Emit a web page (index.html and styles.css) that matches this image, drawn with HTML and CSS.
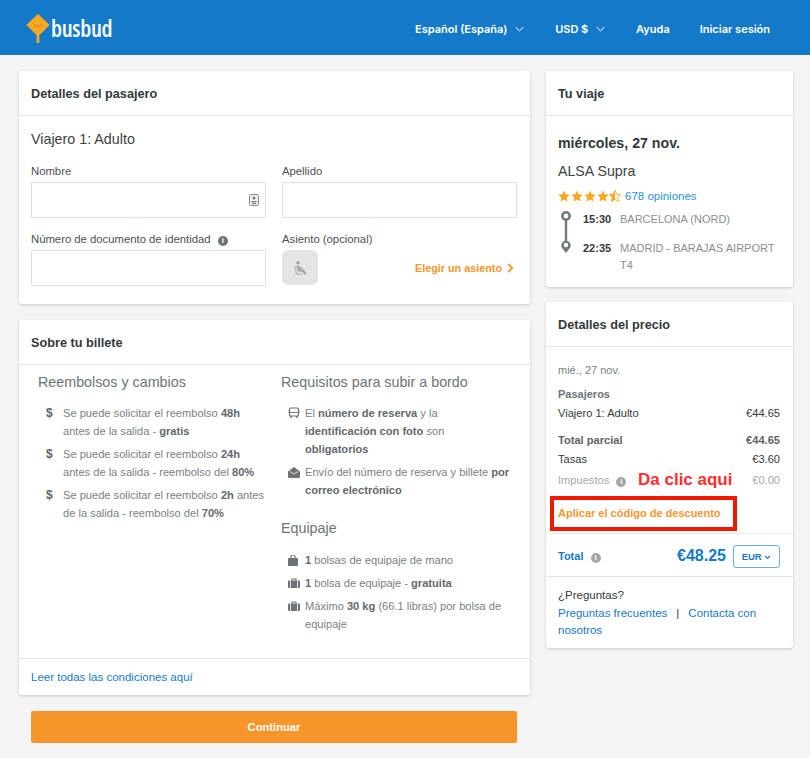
FILE: index.html
```html
<!DOCTYPE html>
<html lang="es">
<head>
    <meta charset="UTF-8">
    <meta name="viewport" content="width=device-width, initial-scale=1.0">
    <title>Busbud - Detalles del pasajero</title>
    <link rel="stylesheet" href="styles.css">
</head>
<body>
    <header class="topbar">
        <a class="logo" href="#">
            <svg class="logo-mark" width="24" height="29" viewBox="0 0 24 29">
                <rect x="10.6" y="18" width="2.8" height="11" fill="#f7a823"/>
                <path d="M12 .5 23.2 11 12.8 21.2a1.2 1.2 0 0 1-1.6 0L.8 11Z" fill="#f7a823" stroke="#f7a823" stroke-linejoin="round"/>
                <path d="M8 9.500c.6 3.600 7.400 3.600 8 0" fill="none" stroke="#e08a12" stroke-width="1.2"/>
            </svg>
            <span class="logo-text">busbud</span>
        </a>
        <nav class="topnav">
            <a href="#">Español (España) <svg class="caret" width="9" height="6" viewBox="0 0 9 6"><path d="M.7 1l3.800 3.800L8.300 1" fill="none" stroke="#9cc8ec" stroke-width="1.2"/></svg></a>
            <a href="#">USD $ <svg class="caret" width="9" height="6" viewBox="0 0 9 6"><path d="M.7 1l3.800 3.800L8.300 1" fill="none" stroke="#9cc8ec" stroke-width="1.2"/></svg></a>
            <a href="#">Ayuda</a>
            <a href="#">Iniciar sesión</a>
        </nav>
    </header>

    <main class="layout">
        <div class="main-col">
            <section class="card">
                <h2 class="card-title">Detalles del pasajero</h2>
                <div class="passenger">
                    <h3 class="traveler">Viajero 1: Adulto</h3>
                    <div class="form-grid">
                        <div class="field">
                            <label>Nombre</label>
                            <div class="input">
                                <svg width="10" height="12" viewBox="0 0 10 12"><rect x=".5" y=".5" width="9" height="11" rx="1" fill="#eee" stroke="#888"/><circle cx="5" cy="4" r="1.5" fill="#777"/><rect x="2.5" y="7" width="5" height="1.2" fill="#777"/><rect x="3" y="9" width="4" height="1" fill="#777"/></svg>
                            </div>
                        </div>
                        <div class="field">
                            <label>Apellido</label>
                            <div class="input"></div>
                        </div>
                        <div class="field">
                            <label>Número de documento de identidad <i class="info">i</i></label>
                            <div class="input"></div>
                        </div>
                        <div class="field">
                            <label>Asiento (opcional)</label>
                            <div class="seat-row">
                                <div class="seat-box">
                                    <svg width="13" height="14" viewBox="0 0 13 14"><circle cx="4" cy="1.800" r="1.700" fill="#a0a0a0"/><path d="M3.500 4.500 5 9.500h4l2.500 3.500" fill="none" stroke="#a0a0a0" stroke-width="2.200"/><path d="M5 6.500l3.500 1" stroke="#a0a0a0" stroke-width="1.400"/><path d="M1 5l1.500 8H8" fill="none" stroke="#bdbdbd" stroke-width="1.600"/></svg>
                                </div>
                                <a class="seat-link" href="#">Elegir un asiento <svg width="7" height="10" viewBox="0 0 7 10"><path d="M1.200 1l4 4-4 4" fill="none" stroke="#f5952a" stroke-width="1.800"/></svg></a>
                            </div>
                        </div>
                    </div>
                </div>
            </section>

            <section class="card">
                <h2 class="card-title">Sobre tu billete</h2>
                <div class="ticket">
                    <div class="ticket-col">
                        <h3 class="ticket-heading">Reembolsos y cambios</h3>
                        <ul class="ticket-list">
                            <li><span class="ticket-icon dollar">$</span><p>Se puede solicitar el reembolso <b>48h</b> antes de la salida - <b>gratis</b></p></li>
                            <li><span class="ticket-icon dollar">$</span><p>Se puede solicitar el reembolso <b>24h</b> antes de la salida - reembolso del <b>80%</b></p></li>
                            <li><span class="ticket-icon dollar">$</span><p>Se puede solicitar el reembolso <b>2h</b> antes de la salida - reembolso del <b>70%</b></p></li>
                        </ul>
                    </div>
                    <div class="ticket-col">
                        <h3 class="ticket-heading">Requisitos para subir a bordo</h3>
                        <ul class="ticket-list">
                            <li>
                                <span class="ticket-icon"><svg width="12" height="12" viewBox="0 0 12 12"><path d="M2.500 1h7a1 1 0 0 1 1 1v6a1 1 0 0 1-1 1h-7a1 1 0 0 1-1-1V2a1 1 0 0 1 1-1ZM1.500 5.500h9" fill="none" stroke="#6d7377" stroke-width="1.200"/><path d="M3 9v2M9 9v2" stroke="#6d7377" stroke-width="1.500"/><path d="M0 3.500v2M12 3.500v2" stroke="#6d7377"/></svg></span>
                                <p>El <b>número de reserva</b> y la <b>identificación con foto</b> son <b>obligatorios</b></p>
                            </li>
                            <li>
                                <span class="ticket-icon"><svg width="12" height="11" viewBox="0 0 12 11"><path d="M0 4.500 6 0l6 4.500V10a1 1 0 0 1-1 1H1a1 1 0 0 1-1-1Z" fill="#6d7377"/><path d="M2 4.500 6 7l4-2.500" fill="none" stroke="#fff" stroke-width=".8"/></svg></span>
                                <p>Envío del número de reserva y billete <b>por correo electrónico</b></p>
                            </li>
                        </ul>
                        <h3 class="ticket-heading luggage">Equipaje</h3>
                        <ul class="ticket-list luggage-list">
                            <li>
                                <span class="ticket-icon"><svg width="10" height="11" viewBox="0 0 10 11"><path d="M3 3.500V2a2 2 0 0 1 4 0v1.500" fill="none" stroke="#6d7377" stroke-width="1.200"/><rect y="3" width="10" height="8" rx="1" fill="#6d7377"/></svg></span>
                                <p><b>1</b> bolsas de equipaje de mano</p>
                            </li>
                            <li>
                                <span class="ticket-icon"><svg width="12" height="10" viewBox="0 0 12 10"><path d="M4 2.500V1h4v1.500" fill="none" stroke="#6d7377" stroke-width="1.200"/><rect y="2.500" width="12" height="7.500" rx="1" fill="#6d7377"/><path d="M2.500 2.500v7.500M9.500 2.500v7.500" stroke="#fff" stroke-width=".8"/></svg></span>
                                <p><b>1</b> bolsa de equipaje - <b>gratuita</b></p>
                            </li>
                            <li>
                                <span class="ticket-icon"><svg width="12" height="10" viewBox="0 0 12 10"><path d="M4 2.500V1h4v1.500" fill="none" stroke="#6d7377" stroke-width="1.200"/><rect y="2.500" width="12" height="7.500" rx="1" fill="#6d7377"/><path d="M2.500 2.500v7.500M9.500 2.500v7.500" stroke="#fff" stroke-width=".8"/></svg></span>
                                <p>Máximo <b>30 kg</b> (66.1 libras) por bolsa de equipaje</p>
                            </li>
                        </ul>
                    </div>
                </div>
                <div class="ticket-foot"><a class="link" href="#">Leer todas las condiciones aquí</a></div>
            </section>

            <div class="continue-wrap">
                <a class="continue" href="#">Continuar</a>
            </div>
        </div>

        <aside class="side-col">
            <section class="card">
                <h2 class="card-title">Tu viaje</h2>
                <div class="trip">
                    <div class="trip-date">miércoles, 27 nov.</div>
                    <div class="trip-operator">ALSA Supra</div>
                    <div class="rating">
                        <svg width="63" height="12" viewBox="0 0 63 12">
                            <defs>
                                <path id="star" d="M6 .5l1.700 3.700 4 .5-3 2.700.8 4L6 9.400 2.500 11.400l.8-4-3-2.700 4-.5Z"/>
                                <path id="half-star" d="M6 .5 4.300 4.200l-4 .5 3 2.700-.8 4L6 9.400Z"/>
                            </defs>
                            <use href="#star" fill="#f7a823"/>
                            <use href="#star" x="13" fill="#f7a823"/>
                            <use href="#star" x="26" fill="#f7a823"/>
                            <use href="#star" x="39" fill="#f7a823"/>
                            <use href="#star" x="51" fill="none" stroke="#f7a823" stroke-width=".9"/>
                            <use href="#half-star" x="51" fill="#f7a823"/>
                        </svg>
                        <a class="link" href="#">678 opiniones</a>
                    </div>
                    <div class="route">
                        <svg class="route-line" width="10" height="42" viewBox="0 0 10 42">
                            <rect x="3.800" y="6" width="2.400" height="26" fill="#6f7a7d"/>
                            <circle cx="5" cy="5" r="3.700" fill="#fff" stroke="#6f7a7d" stroke-width="2.500"/>
                            <path d="M5 42 1.500 37.500A4.700 4.700 0 1 1 8.500 37.500Z" fill="#6f7a7d"/>
                            <circle cx="5" cy="34" r="2.200" fill="#fff"/>
                        </svg>
                        <div class="stops">
                            <div class="stop"><b>15:30</b><span>BARCELONA (NORD)</span></div>
                            <div class="stop"><b>22:35</b><span>MADRID - BARAJAS AIRPORT T4</span></div>
                        </div>
                    </div>
                </div>
            </section>

            <section class="card price-card">
                <h2 class="card-title">Detalles del precio</h2>
                <div class="price-body">
                    <div class="price-date">mié., 27 nov.</div>
                    <div class="price-label">Pasajeros</div>
                    <div class="price-row dark"><span>Viajero 1: Adulto</span><span>€44.65</span></div>
                    <div class="price-row subtotal"><span>Total parcial</span><span>€44.65</span></div>
                    <div class="price-row dark"><span>Tasas</span><span>€3.60</span></div>
                    <div class="price-row muted"><span>Impuestos <i class="info light">i</i></span><span>€0.00</span></div>
                    <a class="promo" href="#">Aplicar el código de descuento</a>
                </div>
                <div class="total-row">
                    <span class="total-label">Total <i class="info light">i</i></span>
                    <span class="total-amount">€48.25</span>
                    <button class="currency">EUR <svg width="7" height="5" viewBox="0 0 7 5"><path d="M1 1l2.500 2.500L6 1" fill="none" stroke="#1479c9" stroke-width="1.100"/></svg></button>
                </div>
                <div class="questions">
                    <div>¿Preguntas?</div>
                    <a class="link" href="#">Preguntas frecuentes</a><span class="sep">|</span><a class="link" href="#">Contacta con nosotros</a>
                </div>
                <span class="note-text">Da clic aqui</span>
                <span class="note-box"></span>
            </section>
        </aside>
    </main>
</body>
</html>
```

FILE: styles.css
```css
* {
    box-sizing: border-box;
}
html, body {
    height: 100%;
}
body {
    margin: 0;
    background-color: #f4f4f4;
    color: #33383b;
    font-family: 'Liberation Sans', Arial, sans-serif;
    font-size: 12px;
    overflow: hidden;
}
a {
    text-decoration: none;
}
h2, h3, p, ul {
    margin: 0;
    padding: 0;
}
ul {
    list-style: none;
}
.topbar {
    height: 55px;
    background-color: #1479c9;
    display: flex;
    align-items: center;
    justify-content: space-between;
    padding: 0 40px 0 26px;
}
.logo {
    display: flex;
    align-items: center;
    gap: 1px;
    color: #fff;
}
.logo-mark {
    margin-top: 2px;
}
.logo-text {
    font-family: 'Open Sans', sans-serif;
    font-size: 23px;
    font-stretch: condensed;
    font-weight: 600;
    letter-spacing: -0.3px;
}
.topnav {
    display: flex;
    gap: 30px;
    padding-top: 2px;
}
.topnav a {
    color: #fff;
    font-family: Inter, sans-serif;
    font-size: 11px;
    font-weight: 600;
}
.caret {
    margin-left: 5px;
    margin-right: 1px;
    vertical-align: 1px;
}
.layout {
    display: grid;
    grid-template-columns: 511px 247px;
    gap: 16px;
    padding: 16px 0 0 19px;
    align-items: start;
}
.main-col, .side-col {
    display: flex;
    flex-direction: column;
    gap: 16px;
}
.side-col {
    gap: 15px;
}
.card {
    background-color: #fff;
    border-radius: 3px;
    box-shadow: 0 1px 3px rgba(0, 0, 0, 0.18);
}
.card-title {
    height: 45px;
    padding: 0 12px;
    line-height: 46px;
    font-size: 12.7px;
    font-weight: 700;
    color: #33383b;
    border-bottom: 1px solid #e4e4e4;
}
.passenger {
    padding: 14px 12px 18px;
}
.traveler {
    font-size: 14.3px;
    font-weight: 400;
    line-height: 18px;
    color: #3c4144;
}
.form-grid {
    display: grid;
    grid-template-columns: 235px 235px;
    gap: 14px 16px;
    margin-top: 16px;
}
.field label {
    display: block;
    height: 15px;
    line-height: 15px;
    margin-bottom: 3px;
    font-size: 11.3px;
    color: #4b5053;
}
.input {
    height: 36px;
    border: 1px solid #e0e0e0;
    border-radius: 1px;
    display: flex;
    align-items: center;
    justify-content: flex-end;
    padding-right: 6px;
}
.info {
    display: inline-block;
    width: 10px;
    height: 10px;
    margin-left: 4px;
    border-radius: 50%;
    background-color: #6d7377;
    color: #fff;
    font-size: 8px;
    font-style: normal;
    font-weight: 700;
    line-height: 10px;
    text-align: center;
    vertical-align: 0;
}
.info.light {
    background-color: #a3a7aa;
}
.seat-row {
    display: flex;
    align-items: center;
    justify-content: space-between;
    padding-right: 3px;
}
.seat-box {
    width: 36px;
    height: 35px;
    border-radius: 7px;
    background-color: #e4e4e4;
    display: flex;
    align-items: center;
    justify-content: center;
}
.seat-link {
    color: #f5952a;
    font-size: 10.8px;
    font-weight: 700;
}
.seat-link svg {
    margin-left: 2px;
    vertical-align: -1px;
}
.ticket {
    display: grid;
    grid-template-columns: 243px 1fr;
    padding: 8px 5px 0 19px;
}
.ticket-col:first-child {
    padding-right: 14px;
}
.ticket-col:last-child {
    padding-right: 15px;
}
.ticket-heading {
    height: 18px;
    line-height: 18px;
    font-size: 14.3px;
    font-weight: 400;
    color: #6d7377;
}
.ticket-heading.luggage {
    margin-top: 20px;
}
.ticket-list {
    margin-top: 13px;
    padding-left: 8px;
    color: #7b8084;
    font-size: 11.1px;
    line-height: 18px;
}
.ticket-col:last-child .ticket-list {
    padding-left: 7px;
}
.ticket-list.luggage-list {
    margin-top: 14px;
}
.ticket-list li {
    display: flex;
    margin-bottom: 5px;
}
.ticket-list b {
    color: #63686c;
}
.ticket-icon {
    flex: none;
    width: 17px;
    height: 18px;
    display: flex;
    align-items: center;
    color: #5f6468;
    font-weight: 700;
    font-size: 12px;
}
.ticket-foot {
    margin-top: 20px;
    height: 37px;
    padding: 0 12px;
    line-height: 37px;
    border-top: 1px solid #e4e4e4;
}
.link {
    color: #1479c9;
    font-size: 11.5px;
}
.continue-wrap {
    padding: 0 13px 0 12px;
}
.continue {
    display: block;
    height: 32px;
    line-height: 32px;
    border-radius: 2px;
    background-color: #f5952a;
    color: #fff;
    text-align: center;
    font-size: 11.2px;
    font-weight: 700;
}
.trip {
    padding: 18px 12px 13px;
}
.trip-date {
    font-size: 14.2px;
    font-weight: 700;
    line-height: 18px;
    color: #33383b;
}
.trip-operator {
    margin-top: 10px;
    font-size: 14.2px;
    line-height: 18px;
    color: #3c4144;
}
.rating {
    display: flex;
    align-items: center;
    gap: 4px;
    margin-top: 8px;
    height: 16px;
}
.rating .link {
    color: #2a8fe0;
}
.route {
    display: flex;
    margin-top: 7px;
    padding-left: 3px;
    gap: 12px;
}
.route-line {
    flex: none;
}
.stops {
    flex: 1;
}
.stop {
    display: grid;
    grid-template-columns: 37px 1fr;
    font-size: 11px;
    line-height: 17px;
    color: #8a8e91;
}
.stop + .stop {
    margin-top: 12px;
}
.stop b {
    color: #33383b;
}
.price-card {
    position: relative;
}
.price-body {
    padding: 15px 13px 0 12px;
    height: 187px;
    border-bottom: 1px solid #eee;
}
.price-date {
    font-size: 11px;
    line-height: 16px;
    color: #7b8084;
}
.price-label {
    margin-top: 8px;
    font-size: 11px;
    line-height: 16px;
    font-weight: 700;
    color: #6d7377;
}
.price-row {
    display: flex;
    justify-content: space-between;
    font-size: 11.1px;
    line-height: 16px;
}
.price-row.dark {
    color: #33383b;
    margin-top: 3px;
}
.price-row.subtotal {
    margin-top: 11px;
    color: #5f6468;
    font-weight: 700;
}
.price-row.muted {
    margin-top: 5px;
    color: #a3a7aa;
}
.promo {
    display: block;
    margin-top: 17px;
    color: #f5952a;
    font-size: 11px;
    font-weight: 700;
    line-height: 16px;
}
.total-row {
    height: 43px;
    display: flex;
    align-items: center;
    padding: 2px 13px 0 12px;
    border-bottom: 1px solid #e4e4e4;
}
.total-label {
    flex: 1;
    color: #1479c9;
    font-size: 11px;
    font-weight: 700;
}
.total-amount {
    color: #1479c9;
    font-size: 16px;
    font-weight: 700;
    margin-right: 7px;
}
.currency {
    width: 47px;
    height: 23px;
    padding: 0;
    border: 1px solid #6aaee3;
    border-radius: 3px;
    background-color: #fff;
    color: #1479c9;
    font-family: inherit;
    font-size: 9.5px;
    font-weight: 700;
}
.questions {
    padding: 10px 12px 8px;
    font-size: 11.5px;
    line-height: 17.5px;
    color: #33383b;
}
.sep {
    margin: 0 9px;
    color: #33383b;
}
.note-text {
    position: absolute;
    left: 92px;
    top: 168px;
    color: #ff2d2d;
    font-size: 17px;
    font-weight: 700;
    line-height: 20px;
}
.note-box {
    position: absolute;
    left: 4px;
    top: 194px;
    width: 187px;
    height: 35px;
    border: 4px solid #f01800;
}
```
